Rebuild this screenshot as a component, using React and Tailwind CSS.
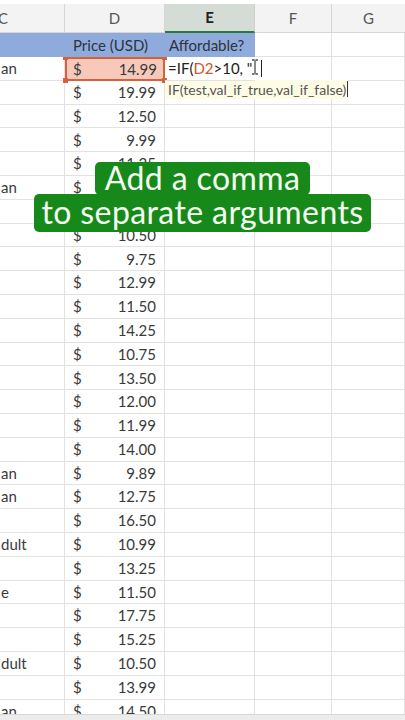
import React from 'react'

const rows = [
  ['an', '14.99'],
  ['', '19.99'],
  ['', '12.50'],
  ['', '9.99'],
  ['', '11.25'],
  ['an', '13.75'],
  ['', '11.00'],
  ['', '10.50'],
  ['', '9.75'],
  ['', '12.99'],
  ['', '11.50'],
  ['', '14.25'],
  ['', '10.75'],
  ['', '13.50'],
  ['', '12.00'],
  ['', '11.99'],
  ['', '14.00'],
  ['an', '9.89'],
  ['an', '12.75'],
  ['', '16.50'],
  ['dult', '10.99'],
  ['', '13.25'],
  ['e', '11.50'],
  ['', '17.75'],
  ['', '15.25'],
  ['dult', '10.50'],
  ['', '13.99'],
  ['an', '14.50'],
]

const cell = 'h-full border-r border-b border-[#e2e2e2] shrink-0'

function Handle({ pos }) {
  return <span className={`absolute w-[5px] h-[5px] bg-[#d4633d] ${pos}`} />
}

function IBeam() {
  return (
    <svg width="8" height="16" viewBox="0 0 8 16" className="absolute left-[86px] top-[2px]">
      <path d="M1 1h2.5M4.5 1H7M4 1.5v13M1 15h2.5M4.5 15H7" stroke="#222" strokeWidth="1.3" fill="none" />
      <path d="M1 1h2.5M4.5 1H7M4 1.5v13M1 15h2.5M4.5 15H7" stroke="#fff" strokeWidth="0.4" fill="none" />
    </svg>
  )
}

export default function App() {
  return (
    <div
      className="w-[405px] h-[720px] bg-white flex flex-col overflow-hidden relative text-[#3a3a3a]"
      style={{ fontFamily: 'Lato, "Open Sans", sans-serif' }}
    >
      <div className="h-[4px] bg-white shrink-0" />

      {/* column letters */}
      <div className="flex h-[29px] shrink-0 bg-[#f3f3f3] text-[15px] text-[#555]">
        <div className="w-[65px] h-full border-r border-b border-[#d6d6d6] flex items-center">
          <span className="-ml-[2px]">C</span>
        </div>
        <div className="w-[100px] h-full border-r border-b border-[#d6d6d6] flex items-center justify-center">D</div>
        <div className="w-[90px] h-full bg-[#d5dcd5] border-r border-[#cfcfcf] border-b-2 border-b-[#2a7a45] flex items-center justify-center font-bold text-[#222]">
          E
        </div>
        <div className="w-[77px] h-full border-r border-b border-[#d6d6d6] flex items-center justify-center">F</div>
        <div className="flex-1 h-full border-b border-[#d6d6d6] flex items-center justify-center">G</div>
      </div>

      {/* header row */}
      <div className="flex h-[24px] shrink-0 text-[15px] text-[#2d3340]">
        <div className="w-[65px] h-full bg-[#8fabdc]" />
        <div className="w-[100px] h-full bg-[#8fabdc] flex items-center pl-[8px]">Price (USD)</div>
        <div className="w-[90px] h-full bg-[#8fabdc] flex items-center pl-[4px]">Affordable?</div>
        <div className={`w-[77px] ${cell}`} />
        <div className={`flex-1 ${cell}`} />
      </div>

      {/* data rows */}
      <div className="flex-1 overflow-hidden">
        {rows.map(([left, price], i) => (
          <div key={i} className="flex h-[23.8px] text-[15px]">
            <div className={`w-[65px] ${cell} flex items-center pl-[1px]`}>{left}</div>
            {i === 0 ? (
              <div className="w-[100px] h-full shrink-0 relative bg-[#f7c9bb] border-2 border-[#d4633d] flex items-center justify-between pl-[6px] pr-[6px]">
                <span>$</span>
                <span>{price}</span>
                <Handle pos="-left-[4px] -top-[4px]" />
                <Handle pos="-right-[4px] -top-[4px]" />
                <Handle pos="-left-[4px] -bottom-[4px]" />
                <Handle pos="-right-[4px] -bottom-[4px]" />
              </div>
            ) : (
              <div className={`w-[100px] ${cell} flex items-center justify-between pl-[8px] pr-[8px]`}>
                <span>$</span>
                <span>{price}</span>
              </div>
            )}
            {i === 0 ? (
              <div className="w-[90px] h-full shrink-0 relative border-b border-[#e2e2e2] flex items-center pl-[3px] text-[#222] whitespace-nowrap overflow-visible z-10">
                <span>
                  =IF(<span className="text-[#c8572f]">D2</span>&gt;10, "
                </span>
                <IBeam />
                <span className="absolute left-[96px] top-[3px] w-[1px] h-[17px] bg-[#222]" />
              </div>
            ) : (
              <div className={`w-[90px] ${cell}`} />
            )}
            <div className={`w-[77px] ${cell}`} />
            <div className={`flex-1 ${cell}`} />
          </div>
        ))}
      </div>

      <div className="h-[6px] shrink-0 bg-[#ececec] border-t border-[#d8d8d8]" />

      {/* function tooltip */}
      <div className="absolute left-[165px] top-[80px] h-[19px] w-[183px] bg-[#fffce6] text-[14px] text-[#555] flex items-center pl-[3px] whitespace-nowrap">
        IF(test,val_if_true,val_if_false)
        <span className="absolute right-0 top-[1px] w-[1px] h-[16px] bg-[#333]" />
      </div>

      {/* caption overlay */}
      <div className="absolute left-0 right-0 top-[162px] flex flex-col items-center text-[#f4fff2] text-[32px] leading-[1] tracking-[0.4px]">
        <div className="bg-[#17891a] rounded-[5px] px-[10px] pt-[0px] pb-[1px] ml-[0px]">Add a comma</div>
        <div className="bg-[#17891a] rounded-[5px] px-[7px] pt-[2px] pb-[4px] -mt-[1px]">to separate arguments</div>
      </div>
    </div>
  )
}
